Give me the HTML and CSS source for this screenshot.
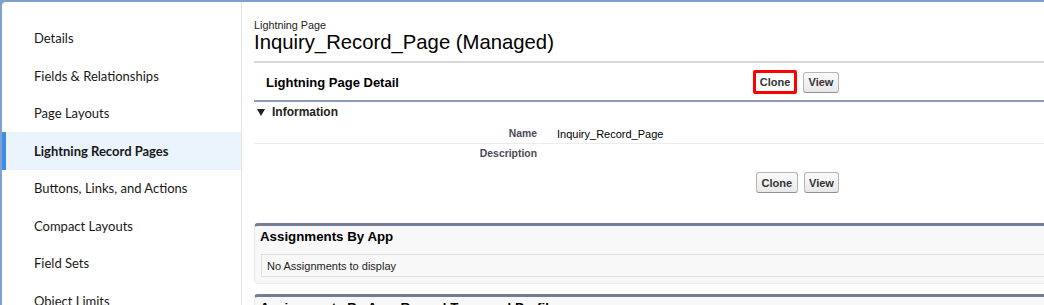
FILE: index.html
```html
<!DOCTYPE html>
<html lang="en">
<head>
    <meta charset="UTF-8">
    <meta name="viewport" content="width=device-width, initial-scale=1.0">
    <title>Inquiry_Record_Page (Managed)</title>
    <link rel="stylesheet" href="styles.css">
</head>
<body>
    <div class="layout">
        <nav class="sidebar">
            <ul class="nav-list">
                <li class="nav-item">Details</li>
                <li class="nav-item">Fields &amp; Relationships</li>
                <li class="nav-item">Page Layouts</li>
                <li class="nav-item active">Lightning Record Pages</li>
                <li class="nav-item">Buttons, Links, and Actions</li>
                <li class="nav-item">Compact Layouts</li>
                <li class="nav-item">Field Sets</li>
                <li class="nav-item">Object Limits</li>
            </ul>
        </nav>

        <main class="main">
            <div class="page-head">
                <div class="page-type">Lightning Page</div>
                <h1 class="page-title">Inquiry_Record_Page (Managed)</h1>
            </div>

            <div class="detail-bar">
                <h2 class="detail-title">Lightning Page Detail</h2>
                <div class="btn-row">
                    <button class="btn btn-highlight">Clone</button>
                    <button class="btn">View</button>
                </div>
            </div>

            <div class="sub-header">
                <svg class="toggle" width="8" height="7" viewBox="0 0 8 7">
                    <polygon points="0,0 8,0 4,7" fill="#222"></polygon>
                </svg>
                <h3>Information</h3>
            </div>

            <div class="field-row">
                <div class="field-label">Name</div>
                <div class="field-value">Inquiry_Record_Page</div>
            </div>
            <div class="field-row last">
                <div class="field-label">Description</div>
                <div class="field-value"></div>
            </div>

            <div class="btn-row bottom">
                <button class="btn">Clone</button>
                <button class="btn">View</button>
            </div>

            <div class="related-block">
                <h3 class="related-title">Assignments By App</h3>
                <div class="related-body">No Assignments to display</div>
            </div>

            <div class="related-block">
                <h3 class="related-title">Assignments By App, Record Type, and Profile</h3>
                <div class="related-body">No Assignments to display</div>
            </div>
        </main>
    </div>
</body>
</html>
```

FILE: styles.css
```css
body {
    margin: 0;
    background-color: #7ea1cf;
    overflow: hidden;
    height: 305px;
}

.layout {
    display: flex;
    margin: 2px 0 0 2px;
    background-color: #fff;
    border-top-left-radius: 4px;
    min-height: 303px;
}

/* Sidebar */
.sidebar {
    flex: 0 0 239px;
    border-right: 1px solid #e3e3e3;
    font-family: Lato, "Open Sans", sans-serif;
    font-size: 13px;
    color: #181818;
}

.nav-list {
    list-style: none;
    margin: 0;
    padding: 17.5px 0 0;
}

.nav-item {
    height: 37.5px;
    display: flex;
    align-items: center;
    padding-left: 28px;
    border-left: 4px solid transparent;
}

.nav-item.active {
    background-color: #ebf3fd;
    border-left-color: #3f8de8;
    font-weight: bold;
}

/* Main content */
.main {
    flex: 0 0 860px;
    padding: 18px 0 0 12px;
    font-family: "Liberation Sans", Arial, sans-serif;
    color: #000;
}

.page-head {
    padding-bottom: 8px;
    border-bottom: 2px solid #d9d9d9;
}

.page-type {
    font-size: 10.8px;
    line-height: 11px;
    color: #222;
}

.page-title {
    margin: 0;
    font-size: 20.3px;
    font-weight: normal;
    line-height: 22px;
    color: #000;
}

.detail-bar {
    display: grid;
    grid-template-columns: 499px auto;
    align-items: center;
    height: 36px;
    padding-top: 1px;
    border-bottom: 2px solid #8d9ebf;
}

.detail-title {
    margin: 0;
    padding-left: 12px;
    font-size: 13px;
    font-weight: bold;
    color: #000;
}

.btn-row {
    display: flex;
    align-items: center;
    gap: 6px;
}

.btn-row.bottom {
    padding: 9px 0 0 502px;
}

.btn {
    height: 21px;
    padding: 0 4.5px;
    font-family: "Liberation Sans", Arial, sans-serif;
    font-size: 11px;
    font-weight: bold;
    color: #333;
    background: linear-gradient(#fbfbfb, #e8e8e8);
    border: 1px solid #b5b5b5;
    border-bottom-color: #8f8f8f;
    border-radius: 3px;
}

.btn-highlight {
    height: 24px;
    width: 44px;
    padding: 0;
    background: #fff;
    border: 3px solid #f00;
    border-radius: 2px;
}

.sub-header {
    display: flex;
    align-items: center;
    gap: 7px;
    height: 20px;
    margin-bottom: 2px;
    padding-left: 3px;
}

.sub-header h3 {
    margin: 0;
    font-size: 12px;
    font-weight: bold;
    color: #222;
}

.field-row {
    display: grid;
    grid-template-columns: 283px auto;
    column-gap: 20px;
    align-items: center;
    height: 19px;
    border-bottom: 1px solid #ececec;
    font-size: 11px;
}

.field-row.last {
    border-bottom: none;
}

.field-label {
    text-align: right;
    font-size: 10.4px;
    font-weight: bold;
    color: #4a4a56;
}

.field-value {
    color: #000;
}

/* Related lists */
.related-block {
    margin-top: 30px;
    background-color: #f8f8f8;
    border: 1px solid #eaeaea;
    border-top: 3px solid #747e96;
    border-radius: 4px;
    padding: 0 0 6px 6px;
}

.related-block + .related-block {
    margin-top: 10px;
}

.related-title {
    margin: 0 0 0 -1px;
    padding: 3px 0 9px;
    line-height: 16px;
    font-size: 13.3px;
    font-weight: bold;
    color: #000;
}

.related-body {
    height: 21px;
    display: flex;
    align-items: center;
    padding-left: 5px;
    border: 1px solid #e0e0e0;
    border-right: none;
    font-size: 11px;
    color: #222;
}
```
